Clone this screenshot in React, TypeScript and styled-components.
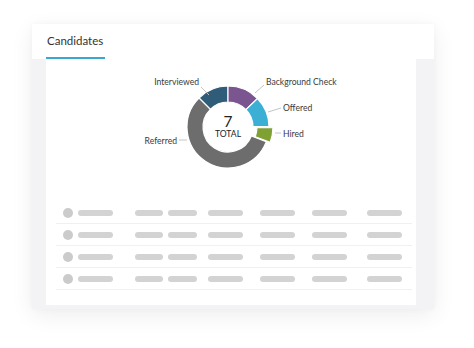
import React from 'react'
import styled, { createGlobalStyle } from 'styled-components'

const GlobalStyle = createGlobalStyle`
  body {
    margin: 0;
    background: #ffffff;
    font-family: Lato, "Open Sans", sans-serif;
  }
`

const Page = styled.div`
  width: 474px;
  height: 348px;
  padding: 24px 0 0 32px;
  box-sizing: border-box;
`

const Frame = styled.div`
  width: 402px;
  height: 285px;
  background: #f3f3f5;
  box-shadow: 0 6px 22px rgba(0, 0, 0, 0.07), 0 0 6px rgba(0, 0, 0, 0.03);
  display: flex;
  flex-direction: column;
`

const Header = styled.div`
  height: 35px;
  background: #ffffff;
  padding-left: 14px;
  display: flex;
  align-items: stretch;
`

const Tab = styled.div`
  display: flex;
  align-items: center;
  padding: 0 2px 0 1px;
  font-size: 11.5px;
  color: #333333;
  border-bottom: 2px solid #3aa9d2;
  box-sizing: border-box;
`

const Body = styled.div`
  flex: 1;
  padding-left: 14px;
  display: flex;
`

const Card = styled.div`
  width: 370px;
  height: 246px;
  background: #ffffff;
  display: flex;
  flex-direction: column;
`

const ChartArea = styled.div`
  height: 143px;
`

const Rows = styled.div`
  margin: 0 4px 0 10px;
`

const Row = styled.div`
  height: 22px;
  box-sizing: border-box;
  border-bottom: 1px solid #f0f0f0;
  padding-left: 7px;
  display: grid;
  grid-template-columns: 15px 57px 33px 40px 52px 52px 55px 35px;
  align-items: center;
`

const Dot = styled.div`
  width: 10px;
  height: 10px;
  border-radius: 50%;
  background: #cbcbcb;
`

const Bar = styled.div<{ $w: number }>`
  width: ${({ $w }) => $w}px;
  height: 6px;
  border-radius: 3px;
  background: #d3d3d3;
`

const CX = 182
const CY = 68
const RO = 41
const RI = 25

const pt = (deg: number, r: number, ox = 0, oy = 0) => {
  const a = (deg * Math.PI) / 180
  return [CX + ox + r * Math.sin(a), CY + oy - r * Math.cos(a)]
}

const arc = (a0: number, a1: number, ox = 0, oy = 0) => {
  const [x0, y0] = pt(a0, RO, ox, oy)
  const [x1, y1] = pt(a1, RO, ox, oy)
  const [x2, y2] = pt(a1, RI, ox, oy)
  const [x3, y3] = pt(a0, RI, ox, oy)
  const large = a1 - a0 > 180 ? 1 : 0
  return `M${x0} ${y0} A${RO} ${RO} 0 ${large} 1 ${x1} ${y1} L${x2} ${y2} A${RI} ${RI} 0 ${large} 0 ${x3} ${y3} Z`
}

const segments = [
  { from: -45, to: 0, color: '#2f5c79' },
  { from: 0, to: 46, color: '#7a5590' },
  { from: 46, to: 89, color: '#3cafd5' },
  { from: 90, to: 111, color: '#7fa134', pop: 4 },
  { from: 111, to: 315, color: '#6d6d6d' },
]

const labels = [
  { text: 'Interviewed', x: 153, y: 26, anchor: 'end', line: [155, 28, 163, 36] },
  { text: 'Background Check', x: 220, y: 26, anchor: 'start', line: [209, 34, 218, 26] },
  { text: 'Offered', x: 237, y: 52, anchor: 'start', line: [222, 53, 235, 49] },
  { text: 'Hired', x: 237, y: 78, anchor: 'start', line: [229, 74, 235, 74] },
  { text: 'Referred', x: 131, y: 85, anchor: 'end', line: [133, 81, 141, 81] },
]

const Donut = () => (
  <svg width="370" height="143" viewBox="0 0 370 143">
    {segments.map((s) => {
      const mid = ((s.from + s.to) / 2) * (Math.PI / 180)
      const ox = s.pop ? s.pop * Math.sin(mid) : 0
      const oy = s.pop ? -s.pop * Math.cos(mid) : 0
      return (
        <path key={s.color} d={arc(s.from, s.to, ox, oy)} fill={s.color} stroke="#ffffff" strokeWidth="1.2" />
      )
    })}
    {labels.map((l) => (
      <g key={l.text}>
        <line x1={l.line[0]} y1={l.line[1]} x2={l.line[2]} y2={l.line[3]} stroke="#c4c4c4" strokeWidth="1" />
        <text
          x={l.x}
          y={l.y}
          textAnchor={l.anchor as 'start' | 'end'}
          fontFamily="Lato, sans-serif"
          fontSize="8.6"
          fill="#3a3a3a"
        >
          {l.text}
        </text>
      </g>
    ))}
    <text x={CX} y={67.5} textAnchor="middle" fontFamily="Lato, sans-serif" fontSize="15.5" fill="#222222">
      7
    </text>
    <text x={CX} y={78} textAnchor="middle" fontFamily="Lato, sans-serif" fontSize="8.6" fill="#222222">
      TOTAL
    </text>
  </svg>
)

const CandidateRow = () => (
  <Row>
    <Dot />
    <Bar $w={35} />
    <Bar $w={28} />
    <Bar $w={29} />
    <Bar $w={35} />
    <Bar $w={35} />
    <Bar $w={35} />
    <Bar $w={35} />
  </Row>
)

const App = () => (
  <Page>
    <GlobalStyle />
    <Frame>
      <Header>
        <Tab>Candidates</Tab>
      </Header>
      <Body>
        <Card>
          <ChartArea>
            <Donut />
          </ChartArea>
          <Rows>
            {[0, 1, 2, 3].map((i) => (
              <CandidateRow key={i} />
            ))}
          </Rows>
        </Card>
      </Body>
    </Frame>
  </Page>
)

export default App
